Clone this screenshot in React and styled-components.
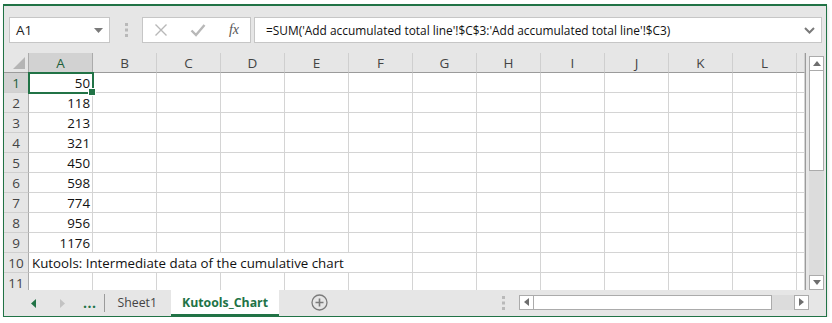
import React from 'react';
import styled, { createGlobalStyle } from 'styled-components';

const GlobalStyle = createGlobalStyle`
  html, body {
    margin: 0;
    padding: 0;
    background: #ffffff;
  }
  body {
    font-family: "Open Sans", "Noto Sans", "Liberation Sans", sans-serif;
  }
`;

const columns = ['A', 'B', 'C', 'D', 'E', 'F', 'G', 'H', 'I', 'J', 'K', 'L', ''];
const values = [50, 118, 213, 321, 450, 598, 774, 956, 1176];

const Dots = () => (
  <DotWrap>
    <svg width="3" height="14" viewBox="0 0 3 14">
      <rect x="0" y="0" width="3" height="3" fill="#b9b9b9" />
      <rect x="0" y="5.5" width="3" height="3" fill="#b9b9b9" />
      <rect x="0" y="11" width="3" height="3" fill="#b9b9b9" />
    </svg>
  </DotWrap>
);

const App = () => {
  return (
    <>
      <GlobalStyle />
      <Window>
        <FormulaRow>
          <NameBox>
            <span>A1</span>
            <svg width="9" height="5" viewBox="0 0 9 5">
              <path d="M0 0 L9 0 L4.5 5 Z" fill="#7a7a7a" />
            </svg>
          </NameBox>
          <Dots />
          <FxBox>
            <svg width="14" height="14" viewBox="0 0 14 14">
              <path d="M1.5 1.5 L12.5 12.5 M12.5 1.5 L1.5 12.5" stroke="#b8b8b8" strokeWidth="1.4" fill="none" />
            </svg>
            <svg width="16" height="14" viewBox="0 0 16 14">
              <path d="M1.5 7.5 L6 12 L14.5 2" stroke="#b8b8b8" strokeWidth="2.4" fill="none" />
            </svg>
            <FxLabel>fx</FxLabel>
          </FxBox>
          <FormulaBox>
            <span>=SUM('Add accumulated total line'!$C$3:'Add accumulated total line'!$C3)</span>
            <svg width="11" height="7" viewBox="0 0 11 7">
              <path d="M1 1 L5.5 5.5 L10 1" stroke="#7a7a7a" strokeWidth="2" fill="none" />
            </svg>
          </FormulaBox>
        </FormulaRow>

        <Middle>
          <Sheet>
            <Corner>
              <svg width="12" height="12" viewBox="0 0 12 12">
                <path d="M12 0 L12 12 L0 12 Z" fill="#b5b5b5" />
              </svg>
            </Corner>
            {columns.map((c, i) => (
              <ColHeader key={c + i} $active={i === 0}>{c}</ColHeader>
            ))}
            {Array.from({ length: 11 }).map((_, r) => (
              <React.Fragment key={r}>
                <RowHeader $active={r === 0}>{r + 1}</RowHeader>
                {columns.map((c, i) => {
                  if (r === 9 && i === 0) {
                    return (
                      <Cell key={i} $span={6} $text>
                        Kutools: Intermediate data of the cumulative chart
                      </Cell>
                    );
                  }
                  if (r === 9 && i > 0 && i < 6) return null;
                  return (
                    <Cell key={i} $selected={r === 0 && i === 0}>
                      {i === 0 && r < 9 ? values[r] : ''}
                      {r === 0 && i === 0 && <Handle />}
                    </Cell>
                  );
                })}
              </React.Fragment>
            ))}
          </Sheet>
          <VScroll>
            <ScrollButton $h={15}>
              <svg width="8" height="5" viewBox="0 0 8 5">
                <path d="M0 5 L8 5 L4 0 Z" fill="#6e6e6e" />
              </svg>
            </ScrollButton>
            <VThumb />
            <Track />
            <ScrollButton $h={15}>
              <svg width="8" height="5" viewBox="0 0 8 5">
                <path d="M0 0 L8 0 L4 5 Z" fill="#6e6e6e" />
              </svg>
            </ScrollButton>
          </VScroll>
        </Middle>

        <TabBar>
          <NavArrows>
            <svg width="5" height="9" viewBox="0 0 5 9">
              <path d="M5 0 L5 9 L0 4.5 Z" fill="#217346" />
            </svg>
            <svg width="5" height="9" viewBox="0 0 5 9">
              <path d="M0 0 L0 9 L5 4.5 Z" fill="#c3c3c3" />
            </svg>
          </NavArrows>
          <More>...</More>
          <TabDivider />
          <Tab>Sheet1</Tab>
          <Tab $active>Kutools_Chart</Tab>
          <AddSheet>
            <svg width="17" height="17" viewBox="0 0 17 17">
              <circle cx="8.5" cy="8.5" r="7.5" stroke="#7b7b7b" strokeWidth="1.3" fill="none" />
              <path d="M8.5 4.5 V12.5 M4.5 8.5 H12.5" stroke="#7b7b7b" strokeWidth="1.6" />
            </svg>
          </AddSheet>
          <Spacer />
          <Dots />
          <HScroll>
            <ScrollButton $w={15}>
              <svg width="5" height="8" viewBox="0 0 5 8">
                <path d="M5 0 L5 8 L0 4 Z" fill="#6e6e6e" />
              </svg>
            </ScrollButton>
            <HThumb />
            <Track />
            <ScrollButton $w={15}>
              <svg width="5" height="8" viewBox="0 0 5 8">
                <path d="M0 0 L0 8 L5 4 Z" fill="#6e6e6e" />
              </svg>
            </ScrollButton>
          </HScroll>
        </TabBar>
      </Window>
    </>
  );
};

export default App;

const Window = styled.div`
  margin: 4px 0 0 3px;
  width: 824px;
  height: 313px;
  box-sizing: border-box;
  border: 1px solid #217346;
  border-top: 2px solid #217346;
  background: #e6e6e6;
  box-shadow: 1px 2px 3px rgba(0, 0, 0, 0.12);
  display: flex;
  flex-direction: column;
  overflow: hidden;
`;

const FormulaRow = styled.div`
  display: flex;
  align-items: center;
  height: 26px;
  margin-top: 11px;
  padding: 0 4px 0 5px;
`;

const NameBox = styled.div`
  width: 101px;
  height: 26px;
  box-sizing: border-box;
  background: #ffffff;
  border: 1px solid #c6c6c6;
  display: flex;
  align-items: center;
  justify-content: space-between;
  padding: 0 6px 0 6px;
  font-size: 13.5px;
  color: #222;
`;

const DotWrap = styled.div`
  width: 32px;
  display: flex;
  justify-content: center;
  align-items: center;
`;

const FxBox = styled.div`
  width: 109px;
  height: 26px;
  box-sizing: border-box;
  background: #ffffff;
  border: 1px solid #c6c6c6;
  display: flex;
  align-items: center;
  justify-content: space-between;
  padding: 0 11px 0 11px;
`;

const FxLabel = styled.span`
  font-family: "Liberation Serif", "DejaVu Serif", serif;
  font-style: italic;
  font-size: 14px;
  color: #555;
`;

const FormulaBox = styled.div`
  flex: 1;
  margin-left: 3px;
  height: 26px;
  box-sizing: border-box;
  background: #ffffff;
  border: 1px solid #c6c6c6;
  display: flex;
  align-items: center;
  justify-content: space-between;
  padding: 0 6px 0 11px;
  font-size: 11.9px;
  color: #111;
  white-space: nowrap;
`;

const Middle = styled.div`
  display: flex;
  margin-top: 10px;
  height: 237px;
`;

const Sheet = styled.div`
  width: 802px;
  height: 237px;
  box-sizing: border-box;
  border-right: 1px solid #9b9b9b;
  background: #ffffff;
  display: grid;
  grid-template-columns: 25px repeat(12, 64px) 1fr;
  grid-auto-rows: 20px;
  overflow: hidden;
  font-size: 13.3px;
  color: #111;
`;

const Corner = styled.div`
  background: #e6e6e6;
  border-right: 1px solid #ababab;
  border-bottom: 1px solid #9b9b9b;
  box-sizing: border-box;
  display: flex;
  align-items: flex-end;
  justify-content: flex-end;
  padding: 0 3px 3px 0;
`;

const ColHeader = styled.div`
  background: ${(p) => (p.$active ? '#d2d2d2' : '#e6e6e6')};
  color: ${(p) => (p.$active ? '#1e5e3a' : '#444')};
  border-right: 1px solid ${(p) => (p.$active ? '#ababab' : '#cfcfcf')};
  border-bottom: 1px solid #9b9b9b;
  box-sizing: border-box;
  display: flex;
  align-items: center;
  justify-content: center;
  font-size: 13.5px;
`;

const RowHeader = styled.div`
  background: ${(p) => (p.$active ? '#d2d2d2' : '#e6e6e6')};
  color: ${(p) => (p.$active ? '#1e5e3a' : '#444')};
  border-right: 1px solid #ababab;
  border-bottom: 1px solid #cfcfcf;
  box-sizing: border-box;
  display: flex;
  align-items: center;
  justify-content: center;
  font-size: 13.5px;
`;

const Cell = styled.div`
  position: relative;
  grid-column: span ${(p) => p.$span || 1};
  box-sizing: border-box;
  border-right: 1px solid #d4d4d4;
  border-bottom: 1px solid #d4d4d4;
  display: flex;
  align-items: center;
  justify-content: ${(p) => (p.$text ? 'flex-start' : 'flex-end')};
  padding: 0 2px 0 3px;
  white-space: nowrap;
  ${(p) =>
    p.$selected &&
    `
    outline: 2px solid #217346;
    outline-offset: -1px;
    z-index: 1;
  `}
`;

const Handle = styled.span`
  position: absolute;
  right: -4px;
  bottom: -4px;
  width: 6px;
  height: 6px;
  background: #217346;
  border: 1px solid #ffffff;
`;

const VScroll = styled.div`
  width: 15px;
  margin: 3px 0 0 3px;
  display: flex;
  flex-direction: column;
`;

const ScrollButton = styled.div`
  width: ${(p) => (p.$w ? `${p.$w}px` : '100%')};
  height: ${(p) => (p.$h ? `${p.$h}px` : '100%')};
  flex-shrink: 0;
  box-sizing: border-box;
  border: 1px solid #ababab;
  background: #ffffff;
  display: flex;
  align-items: center;
  justify-content: center;
`;

const VThumb = styled.div`
  height: 100px;
  box-sizing: border-box;
  border: 1px solid #ababab;
  border-top: none;
  background: #ffffff;
`;

const Track = styled.div`
  flex: 1;
  background: #dcdcdc;
`;

const TabBar = styled.div`
  display: flex;
  align-items: stretch;
  height: 27px;
  padding-right: 17px;
`;

const NavArrows = styled.div`
  display: flex;
  align-items: center;
  gap: 24px;
  padding-left: 27px;
`;

const More = styled.div`
  display: flex;
  align-items: center;
  margin-left: 18px;
  color: #217346;
  font-weight: 700;
  font-size: 14px;
  letter-spacing: 0.5px;
  padding-bottom: 2px;
`;

const TabDivider = styled.div`
  width: 1px;
  background: #9b9b9b;
  margin: 4px 0 4px 8px;
`;

const Tab = styled.div`
  display: flex;
  align-items: center;
  padding: ${(p) => (p.$active ? '0 11px' : '0 14px 0 12px')};
  height: 24px;
  font-size: 12.3px;
  background: ${(p) => (p.$active ? '#ffffff' : 'transparent')};
  color: ${(p) => (p.$active ? '#217346' : '#444')};
  font-weight: ${(p) => (p.$active ? 700 : 400)};
  border-bottom: ${(p) => (p.$active ? '2px solid #217346' : '2px solid transparent')};
`;

const AddSheet = styled.div`
  display: flex;
  align-items: center;
  margin-left: 32px;
  padding-bottom: 2px;
`;

const Spacer = styled.div`
  flex: 1;
`;

const HScroll = styled.div`
  width: 290px;
  height: 15px;
  align-self: center;
  margin-top: -2px;
  display: flex;
`;

const HThumb = styled.div`
  width: 238px;
  box-sizing: border-box;
  border: 1px solid #ababab;
  border-left: none;
  background: #ffffff;
`;
